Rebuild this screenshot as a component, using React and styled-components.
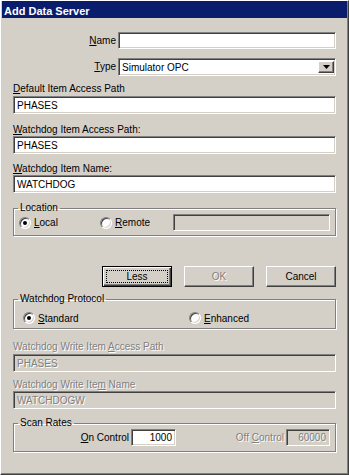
import React from 'react';
import styled, { createGlobalStyle, css } from 'styled-components';

const GlobalStyle = createGlobalStyle`
  body {
    margin: 0;
    background: #d4d0c8;
    font-family: "Liberation Sans", Arial, sans-serif;
    font-size: 10px;
    color: #000;
  }
`;

const Window = styled.div`
  box-sizing: border-box;
  width: 349px;
  height: 475px;
  background: #d4d0c8;
  border: 1px solid;
  border-color: #ffffff #404040 #404040 #ffffff;
  box-shadow: inset -1px -1px #808080;
  padding: 0 1px;
  display: flex;
  flex-direction: column;
`;

const TitleBar = styled.div`
  box-sizing: border-box;
  height: 17px;
  background: #0a1c6c;
  color: #fff;
  font-weight: bold;
  font-size: 11px;
  line-height: 14px;
  padding: 3px 0 0 2px;
`;

const Body = styled.div`
  display: flex;
  flex-direction: column;
  padding: 0 11px;
`;

const Block = styled.div`
  margin-top: ${(p) => p.$top || 0}px;
`;

const disabledText = css`
  color: #808080;
  text-shadow: 1px 1px #ffffff;
`;

const Label = styled.div`
  line-height: 12px;
  height: 12px;
  white-space: nowrap;
  margin-top: ${(p) => p.$top || 0}px;
  text-align: ${(p) => p.$align || 'left'};
  ${(p) => p.$disabled && disabledText}
`;

const FieldRow = styled.div`
  display: grid;
  grid-template-columns: 103px 1fr;
  column-gap: 2px;
  align-items: center;
  margin-top: ${(p) => p.$top || 0}px;
`;

const sunken = css`
  box-sizing: border-box;
  border: 1px solid;
  border-color: #808080 #ffffff #ffffff #808080;
  box-shadow: inset 1px 1px #404040, inset -1px -1px #d4d0c8;
`;

const TextField = styled.input`
  ${sunken}
  display: block;
  width: 100%;
  height: ${(p) => p.$h || 18}px;
  margin: 0;
  margin-top: ${(p) => p.$top || 0}px;
  padding: 0 3px;
  font: inherit;
  font-size: 10px;
  text-align: ${(p) => p.$align || 'left'};
  background: ${(p) => (p.disabled ? '#d4d0c8' : '#ffffff')};
  color: #000;
  outline: none;
  ${(p) => p.disabled && disabledText}
  &:disabled {
    -webkit-text-fill-color: #808080;
  }
`;

const SelectBox = styled.div`
  ${sunken}
  height: 18px;
  background: #fff;
  display: flex;
  align-items: stretch;
  padding: 2px 1px 2px 2px;
`;

const SelectText = styled.div`
  flex: 1;
  line-height: 14px;
  padding-left: 1px;
`;

const raised = css`
  box-sizing: border-box;
  background: #d4d0c8;
  border: 1px solid;
  border-color: #ffffff #404040 #404040 #ffffff;
  box-shadow: inset -1px -1px #808080, inset 1px 1px #d4d0c8;
`;

const DropButton = styled.div`
  ${raised}
  width: 16px;
  display: flex;
  align-items: center;
  justify-content: center;
`;

const Group = styled.fieldset`
  margin: 0;
  margin-top: ${(p) => p.$top || 0}px;
  padding: ${(p) => p.$pt || 0}px 0 ${(p) => p.$pb || 0}px 0;
  border: 1px solid #808080;
  box-shadow: inset 1px 1px #ffffff, 1px 1px #ffffff;
  min-width: 0;
`;

const Legend = styled.legend`
  margin-left: 4px;
  padding: 0 2px;
  line-height: 12px;
  font-size: 10px;
`;

const GroupRow = styled.div`
  display: flex;
  align-items: center;
  height: ${(p) => p.$h || 17}px;
  padding-left: ${(p) => p.$pl || 0}px;
  padding-right: ${(p) => p.$pr || 0}px;
`;

const RadioItem = styled.div`
  display: flex;
  align-items: center;
  gap: 3px;
  width: ${(p) => (p.$w ? `${p.$w}px` : 'auto')};
  flex-shrink: 0;
`;

const RadioCircle = styled.span`
  box-sizing: border-box;
  width: 12px;
  height: 12px;
  border-radius: 50%;
  border: 1px solid;
  border-color: #808080 #ffffff #ffffff #808080;
  box-shadow: inset 1px 1px #404040, inset -1px -1px #d4d0c8;
  background: #fff;
  display: flex;
  align-items: center;
  justify-content: center;
  &::after {
    content: '';
    width: 4px;
    height: 4px;
    border-radius: 50%;
    background: ${(p) => (p.$checked ? '#000' : 'transparent')};
  }
`;

const ScanGrid = styled.div`
  display: grid;
  grid-template-columns: 115px 45px 1fr 44px;
  column-gap: 2px;
  align-items: center;
  height: 17px;
  padding: 0 5px 0 0;
`;

const ButtonRow = styled.div`
  display: flex;
  justify-content: flex-end;
  gap: 12px;
  margin-top: ${(p) => p.$top || 0}px;
`;

const Button = styled.div`
  ${raised}
  position: relative;
  width: 70px;
  height: 21px;
  display: flex;
  align-items: center;
  justify-content: center;
  ${(p) => p.$disabled && disabledText}
  ${(p) =>
    p.$default &&
    css`
      border: 1px solid #000;
      box-shadow: inset 1px 1px #ffffff, inset -1px -1px #404040, inset -2px -2px #808080;
      &::after {
        content: '';
        position: absolute;
        inset: 3px;
        border: 1px dotted #000;
      }
    `}
`;

const Radio = ({ checked, children, w }) => (
  <RadioItem $w={w}>
    <RadioCircle $checked={checked} />
    <span>{children}</span>
  </RadioItem>
);

export default function App() {
  return (
    <>
      <GlobalStyle />
      <Window>
        <TitleBar>Add Data Server</TitleBar>
        <Body>
          <FieldRow $top={14}>
            <Label $align="right"><u>N</u>ame</Label>
            <TextField $h={17} readOnly defaultValue="" />
          </FieldRow>
          <FieldRow $top={9}>
            <Label $align="right"><u>T</u>ype</Label>
            <SelectBox>
              <SelectText>Simulator OPC</SelectText>
              <DropButton>
                <svg width="7" height="4" viewBox="0 0 7 4">
                  <path d="M0 0h7L3.5 4z" fill="#000" />
                </svg>
              </DropButton>
            </SelectBox>
          </FieldRow>

          <Block $top={7}>
            <Label><u>D</u>efault Item Access Path</Label>
            <TextField $top={1} readOnly defaultValue="PHASES" />
          </Block>
          <Block $top={10}>
            <Label><u>W</u>atchdog Item Access Path:</Label>
            <TextField readOnly defaultValue="PHASES" />
          </Block>
          <Block $top={9}>
            <Label><u>W</u>atchdog Item Name:</Label>
            <TextField readOnly defaultValue="WATCHDOG" />
          </Block>

          <Group $top={9} $pb={4}>
            <Legend>Location</Legend>
            <GroupRow $pl={5} $pr={5}>
              <Radio checked w={81}><u>L</u>ocal</Radio>
              <Radio w={73}><u>R</u>emote</Radio>
              <TextField $h={17} disabled defaultValue="" />
            </GroupRow>
          </Group>

          <ButtonRow $top={30}>
            <Button $default>Less</Button>
            <Button $disabled>OK</Button>
            <Button>Cancel</Button>
          </ButtonRow>

          <Group $top={6} $pt={6} $pb={3}>
            <Legend>Watchdog Protocol</Legend>
            <GroupRow $h={14} $pl={9}>
              <Radio checked w={166}><u>S</u>tandard</Radio>
              <Radio><u>E</u>nhanced</Radio>
            </GroupRow>
          </Group>

          <Block $top={12}>
            <Label $disabled>Watchdog Write Item <u>A</u>ccess Path</Label>
            <TextField $top={1} disabled defaultValue="PHASES" />
          </Block>
          <Block $top={7}>
            <Label $disabled>Watchdog Write Ite<u>m</u> Name</Label>
            <TextField disabled defaultValue="WATCHDOGW" />
          </Block>

          <Group $top={8} $pb={5}>
            <Legend>Scan Rates</Legend>
            <ScanGrid>
              <Label $align="right"><u>O</u>n Control</Label>
              <TextField $h={17} $align="right" readOnly defaultValue="1000" />
              <Label $align="right" $disabled>Off <u>C</u>ontrol</Label>
              <TextField $h={17} $align="right" disabled defaultValue="60000" />
            </ScanGrid>
          </Group>
        </Body>
      </Window>
    </>
  );
}
